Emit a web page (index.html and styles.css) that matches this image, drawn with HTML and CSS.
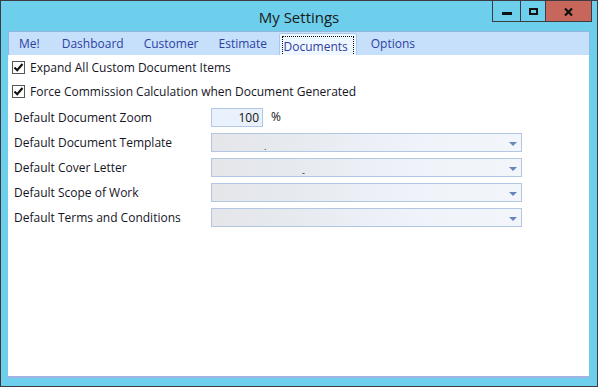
FILE: index.html
```html
<!DOCTYPE html>
<html>
<head>
<meta charset="utf-8">
<link rel="stylesheet" href="styles.css">
</head>
<body>
<div class="window">
  <div class="titlebar">
    <div class="spacer"></div>
    <div class="title">My Settings</div>
    <div class="controls">
      <div class="btn btn-min"><span class="min-bar"></span></div>
      <div class="btn btn-max"><span class="max-box"></span></div>
      <div class="btn btn-close">
        <svg width="9" height="8" viewBox="0 0 9 8"><path d="M1 0.5 L8 7.5 M8 0.5 L1 7.5" stroke="#111" stroke-width="2.2" fill="none"/></svg>
      </div>
    </div>
  </div>
  <div class="tabctl">
    <div class="tabstrip">
      <div class="tab first">Me!</div>
      <div class="tab">Dashboard</div>
      <div class="tab">Customer</div>
      <div class="tab">Estimate</div>
      <div class="tab active"><span class="focus">Documents</span></div>
      <div class="tab">Options</div>
    </div>
    <div class="page">
      <label class="check-row">
        <span class="box"><svg width="11" height="11" viewBox="0 0 11 11"><path d="M1.5 5.5 L4.2 8.3 L9.5 2" stroke="#111" stroke-width="2.1" fill="none"/></svg></span>
        <span>Expand All Custom Document Items</span>
      </label>
      <label class="check-row">
        <span class="box"><svg width="11" height="11" viewBox="0 0 11 11"><path d="M1.5 5.5 L4.2 8.3 L9.5 2" stroke="#111" stroke-width="2.1" fill="none"/></svg></span>
        <span>Force Commission Calculation when Document Generated</span>
      </label>
      <div class="form">
        <div class="label">Default Document Zoom</div>
        <div class="field"><span class="num">100</span><span class="pct">%</span></div>
        <div class="label">Default Document Template</div>
        <div class="field"><div class="combo"><span class="val v1">.</span><span class="arrow"></span></div></div>
        <div class="label">Default Cover Letter</div>
        <div class="field"><div class="combo"><span class="val v2">-</span><span class="arrow"></span></div></div>
        <div class="label">Default Scope of Work</div>
        <div class="field"><div class="combo"><span class="val"></span><span class="arrow"></span></div></div>
        <div class="label">Default Terms and Conditions</div>
        <div class="field"><div class="combo"><span class="val"></span><span class="arrow"></span></div></div>
      </div>
    </div>
  </div>
</div>
</body>
</html>
```
FILE: styles.css
```css
* { box-sizing: border-box; }
html, body { margin: 0; padding: 0; }
body {
  width: 598px;
  height: 387px;
  overflow: hidden;
  font-family: "Open Sans", "Noto Sans", "Liberation Sans", sans-serif;
}
.window {
  width: 598px;
  height: 387px;
  border: 1px solid #3b3b41;
  background: #6dcfeb;
  display: flex;
  flex-direction: column;
}
.titlebar {
  height: 30px;
  display: grid;
  grid-template-columns: 1fr auto 1fr;
  align-items: start;
}
.title {
  font-size: 15px;
  color: #1a1a1a;
  line-height: 30px;
  padding-top: 1px;
}
.controls {
  justify-self: end;
  margin-right: 5px;
  margin-top: -1px;
  display: flex;
  height: 22px;
  border: 1px solid #3b3b41;
}
.btn {
  height: 100%;
  display: flex;
  align-items: center;
  justify-content: center;
}
.btn-min { width: 28px; border-right: 1px solid #3b3b41; }
.btn-max { width: 25px; border-right: 1px solid #3b3b41; }
.btn-close { width: 45px; background: #c7665a; }
.min-bar { display: block; width: 10px; height: 3px; background: #111; margin-top: 5px; }
.max-box { display: block; width: 9px; height: 7px; border: 2px solid #111; margin-top: 1px; }
.btn-close svg { margin-top: 1px; }

.tabctl {
  flex: 1;
  margin: 0 7px 8px 7px;
  display: flex;
  flex-direction: column;
}
.tabstrip {
  height: 24px;
  background: #c6e0fc;
  border: 1px solid #93b6de;
  border-bottom: none;
  display: flex;
  align-items: flex-end;
}
.tab {
  font-size: 12px;
  color: #2e3fa0;
  padding: 0 10px 0 10px;
  height: 22px;
  line-height: 22px;
}
.tab.first { padding-right: 12px; }
.tab.active {
  background: #eef6ff;
  border: 1px solid #a9c8ec;
  border-bottom: none;
  padding: 2px 2px 0 2px;
  margin: 0 4px 0 1.5px;
  height: 22px;
  border-radius: 2px 2px 0 0;
}
.focus {
  display: block;
  border: 1px dotted #111;
  border-bottom: none;
  padding: 0 5px 0 1px;
  height: 20px;
  line-height: 19px;
}
.page {
  flex: 1;
  background: #fff;
  border-bottom: 2px solid #a2b2e2;
  margin-right: 1px;
  padding-left: 3px;
  color: #15151f;
  font-size: 12px;
}
.check-row {
  display: flex;
  align-items: center;
  height: 24px;
}
.box {
  width: 13px;
  height: 13px;
  border: 1px solid #555;
  background: #fff;
  display: flex;
  align-items: center;
  justify-content: center;
  margin: 0 5px 0 1px;
}
.form {
  margin-top: 2px;
  display: grid;
  grid-template-columns: 200px 311px;
  grid-auto-rows: 25px;
  align-items: center;
}
.label { padding-left: 3px; }
.field { display: flex; align-items: center; }
.num {
  width: 52px;
  height: 19px;
  background: #e8f1fc;
  border: 1px solid #b3c8e6;
  text-align: right;
  padding-right: 3px;
  line-height: 17px;
  font-size: 12px;
  color: #111;
}
.pct { margin-left: 8px; font-size: 12px; color: #111; margin-top: -2px; }
.combo {
  width: 311px;
  height: 19px;
  border: 1px solid #b3c7e3;
  background: linear-gradient(to right, #e4e6ea 0%, #e6e9ee 25%, #ebeff5 45%, #f0f4fa 70%, #f2f6fb 100%);
  display: flex;
  align-items: center;
}
.val { flex: 1; font-size: 9px; line-height: 1; color: #222; }
.v1 { padding-left: 52px; margin-top: 8px; }
.v2 { padding-left: 90px; margin-top: 10px; }
.arrow {
  width: 0;
  height: 0;
  border-left: 4px solid transparent;
  border-right: 4px solid transparent;
  border-top: 4px solid #6685b8;
  margin-right: 4px;
  margin-top: 2px;
}
```
